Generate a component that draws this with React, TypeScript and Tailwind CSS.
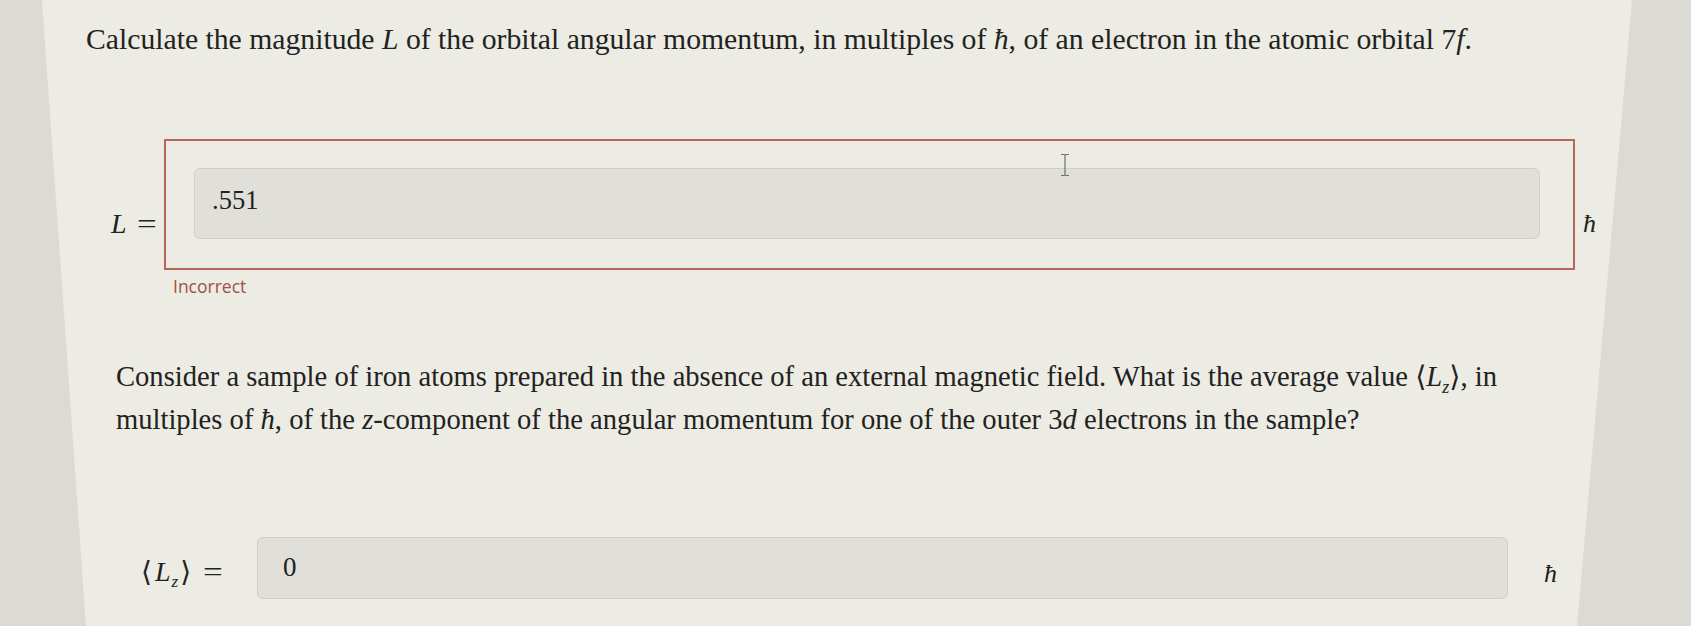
import React from "react";

const serif = { fontFamily: '"Liberation Serif", "DejaVu Serif", "Times New Roman", serif' };

function Hbar() {
  return <span className="italic">ħ</span>;
}

function Cursor() {
  return (
    <svg className="absolute left-[894px] top-[12px]" width="10" height="24" viewBox="0 0 10 24">
      <path d="M1 1.5 H4 Q5 1.5 5 3 V21 Q5 22.5 4 22.5 H1 M9 1.5 H6 Q5 1.5 5 3 M5 21 Q5 22.5 6 22.5 H9" stroke="#6f6f6a" strokeWidth="1.2" fill="none" />
    </svg>
  );
}

export default function App() {
  return (
    <div className="w-[1691px] h-[626px] overflow-hidden bg-[#dcdbd3]">
      <div
        className="w-full h-full bg-[#ecebe4] text-[#222220] [clip-path:polygon(42px_0,1632px_0,1577px_626px,86px_626px)]"
        style={serif}
      >
        <p className="pl-[86px] pt-[21px] text-[29.7px] leading-[36px] whitespace-nowrap">
          Calculate the magnitude <i>L</i> of the orbital angular momentum, in multiples of <Hbar />, of an electron in the atomic orbital 7<i>f</i>.
        </p>

        <div className="flex items-start mt-[82px]">
          <div className="w-[164px] shrink-0 pl-[111px] pt-[69px] text-[28px] leading-[32px] whitespace-nowrap">
            <i>L</i><span className="ml-[12px] inline-block scale-x-125">=</span>
          </div>
          <div className="relative w-[1411px] h-[131px] shrink-0 border-2 border-[#b8655a] pt-[27px] pl-[28px] pr-[33px]">
            <Cursor />
            <div className="h-[71px] rounded-md bg-[#e0dfd9] border border-[#cfcec7] pl-[17px] pt-[16px] text-[26.5px] leading-[30px]">
              .551
            </div>
          </div>
          <div className="pl-[8px] pt-[70px] text-[26px] leading-[30px]">
            <Hbar />
          </div>
        </div>

        <div className="pl-[173px] mt-[5px] text-[17.5px] leading-[22px] text-[#9d5146]" style={{ fontFamily: '"Open Sans", "Noto Sans", sans-serif' }}>
          Incorrect
        </div>

        <p className="pl-[116px] mt-[58px] text-[28.6px] leading-[43px] whitespace-nowrap">
          Consider a sample of iron atoms prepared in the absence of an external magnetic field. What is the average value ⟨<i>L</i><sub className="text-[18px] italic align-[-2px]">z</sub>⟩, in
          <br />
          multiples of <Hbar />, of the <i>z</i>-component of the angular momentum for one of the outer 3<i>d</i> electrons in the sample?
        </p>

        <div className="flex items-start mt-[96px]">
          <div className="w-[257px] shrink-0 pl-[141px] pt-[19px] text-[28px] leading-[32px] whitespace-nowrap">
            ⟨<i className="ml-[3px]">L</i><sub className="ml-[1px] text-[17px] italic align-[-2px]">z</sub><span className="ml-[2px]">⟩</span><span className="ml-[14px] inline-block scale-x-125">=</span>
          </div>
          <div className="w-[1251px] h-[62px] shrink-0 rounded-md bg-[#e0dfd9] border border-[#cfcec7] pl-[25px] pt-[14px] text-[27px] leading-[30px]">
            0
          </div>
          <div className="pl-[36px] pt-[22px] text-[26px] leading-[30px]">
            <Hbar />
          </div>
        </div>
      </div>
    </div>
  );
}
